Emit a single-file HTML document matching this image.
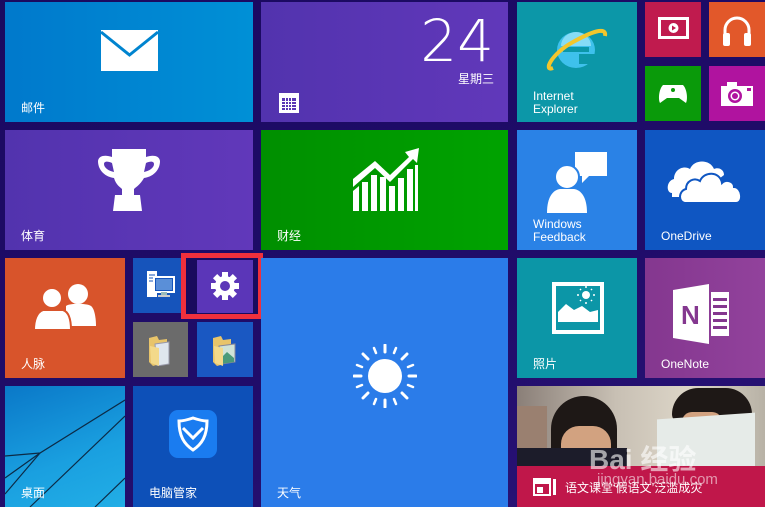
<!DOCTYPE html>
<html><head><meta charset="utf-8">
<style>
*{margin:0;padding:0;box-sizing:border-box}
body{width:765px;height:507px;overflow:hidden;background:#1a0b5e;position:relative;font-family:"Liberation Sans","Noto Sans CJK SC",sans-serif}
.t{position:absolute;overflow:hidden}
.l{position:absolute;left:16px;bottom:7px;color:#fff;font-size:12px;line-height:13px}
svg{position:absolute}
</style></head><body>
<div style="position:absolute;left:0;top:0;width:765px;height:507px;background:linear-gradient(160deg,#1a0a60 0%,#200c6a 60%,#2a1478 100%)"></div>

<!-- Mail -->
<div class="t" style="left:5px;top:2px;width:248px;height:120px;background:linear-gradient(90deg,#0079cc,#0090d6)">
<svg style="left:96px;top:28px" width="57" height="41" viewBox="0 0 57 41"><rect width="57" height="41" fill="#fff"/><path d="M0 2 L28.5 25 L57 2" stroke="#0084cf" stroke-width="3" fill="none"/></svg>
<div class="l">邮件</div></div>

<!-- Calendar -->
<div class="t" style="left:261px;top:2px;width:247px;height:120px;background:linear-gradient(90deg,#5233ae,#6138ba)">
<div style="position:absolute;right:14px;top:10px;color:#fff;font-size:58px;line-height:58px;font-family:'DejaVu Sans',sans-serif;font-weight:200">24</div>
<div style="position:absolute;right:14px;top:68px;color:#fff;font-size:12px">星期三</div>
<svg style="left:18px;top:91px" width="20" height="20" viewBox="0 0 20 20"><rect width="20" height="20" fill="#fff"/><g fill="#5a36b4"><rect x="3" y="5" width="14" height="12"/></g><g stroke="#fff" stroke-width="1"><path d="M3 8.5h14M3 11.5h14M3 14.5h14M6.5 5v12M9.5 5v12M12.5 5v12"/></g></svg>
</div>

<!-- IE -->
<div class="t" style="left:517px;top:2px;width:120px;height:120px;background:#0c97a8">
<svg style="left:26px;top:22px" width="66" height="52" viewBox="0 0 66 52"><ellipse cx="33" cy="26" rx="19" ry="18" fill="#3ec1ec"/><rect x="20" y="23" width="26" height="5" fill="#0c97a8"/><path d="M18 22 A15 14 0 0 1 48 22" fill="#86dcf6"/><rect x="36" y="30" width="18" height="10" fill="#0c97a8"/><path d="M10 44 C0 48 8 30 30 18 C48 8 64 2 62 12" stroke="#f3c62c" stroke-width="4" fill="none"/></svg>
<div class="l" style="bottom:6px;font-size:12px;line-height:13px">Internet<br>Explorer</div></div>

<!-- small top -->
<div class="t" style="left:645px;top:2px;width:56px;height:55px;background:#c01b4e">
<svg style="left:13px;top:15px" width="31" height="22"><rect x="1.5" y="1.5" width="28" height="19" fill="none" stroke="#fff" stroke-width="3"/><circle cx="15.5" cy="11" r="5" fill="#fff"/><path d="M14 8.5 L18 11 L14 13.5z" fill="#c01b4e"/></svg></div>
<div class="t" style="left:709px;top:2px;width:56px;height:55px;background:#e2582a">
<svg style="left:12px;top:12px" width="32" height="34" viewBox="0 0 32 34"><path d="M4 26 V16 A12 12 0 0 1 28 16 V26" stroke="#fff" stroke-width="3" fill="none"/><rect x="2" y="19" width="7" height="13" rx="2" fill="#fff"/><rect x="23" y="19" width="7" height="13" rx="2" fill="#fff"/></svg></div>
<div class="t" style="left:645px;top:66px;width:56px;height:55px;background:#0a9a0a">
<svg style="left:13px;top:17px" width="30" height="22" viewBox="0 0 30 22"><path d="M5 2 H25 C29 6 30 16 28 20 L21 15 H9 L2 20 C0 16 1 6 5 2z" fill="#fff"/><circle cx="15" cy="7" r="2" fill="#0a9a0a"/></svg></div>
<div class="t" style="left:709px;top:66px;width:56px;height:55px;background:#b0139f">
<svg style="left:12px;top:16px" width="32" height="24" viewBox="0 0 32 24"><rect x="0" y="4" width="32" height="20" fill="#fff"/><rect x="6" y="0" width="10" height="5" fill="#fff"/><rect x="26" y="6" width="4" height="3" fill="#b0139f"/><circle cx="14" cy="14" r="7" fill="#b0139f"/><circle cx="14" cy="14" r="4.5" fill="#fff"/><circle cx="14" cy="14" r="3" fill="#b0139f"/></svg></div>

<!-- Sports -->
<div class="t" style="left:5px;top:130px;width:248px;height:120px;background:linear-gradient(90deg,#5233ae,#6138ba)">
<svg style="left:91px;top:17px" width="66" height="64" viewBox="0 0 66 64"><path d="M16 2 H50 V10 C56 8 63 8 64 14 C64 24 56 30 48 31 C44 38 40 40 38 42 V48 H44 L46 64 H17 L19 48 H26 V42 C24 40 20 38 18 31 C10 30 2 24 2 14 C3 8 10 8 16 10z M16 16 C12 14 8 14 8 17 C8 21 13 24 18 25z M50 16 C54 14 58 14 58 17 C58 21 53 24 48 25z" fill="#fff" fill-rule="evenodd"/></svg>
<div class="l">体育</div></div>

<!-- Finance -->
<div class="t" style="left:261px;top:130px;width:247px;height:120px;background:linear-gradient(90deg,#008f00,#00a300)">
<svg style="left:92px;top:17px" width="66" height="64" viewBox="0 0 66 64"><path d="M0 32 L22 14 L37 28 L56 10 L52 5 L66 1 L64 16 L60 12 L37 35 L22 21 L0 40z" fill="#fff"/><g fill="#fff"><path d="M0 44 L6 39 V64 H0z"/><rect x="9" y="35" width="6" height="29"/><rect x="18" y="28" width="6" height="36"/><rect x="27" y="30" width="6" height="34"/><rect x="36" y="39" width="6" height="25"/><rect x="45" y="31" width="6" height="33"/><rect x="54" y="22" width="6" height="42"/><rect x="62" y="18" width="3" height="46"/></g></svg>
<div class="l">财经</div></div>

<!-- Feedback -->
<div class="t" style="left:517px;top:130px;width:120px;height:120px;background:#2a82e6">
<svg style="left:28px;top:22px" width="62" height="62" viewBox="0 0 62 62"><path d="M30 0 H62 V24 H44 L37 31 V24 H30z" fill="#fff"/><circle cx="22" cy="25" r="12" fill="#fff" stroke="#2a82e6" stroke-width="2"/><path d="M2 61 C2 45 8 38 15 37 H29 C36 38 42 45 42 61z" fill="#fff"/></svg>
<div class="l" style="bottom:6px">Windows<br>Feedback</div></div>

<!-- OneDrive -->
<div class="t" style="left:645px;top:130px;width:120px;height:120px;background:#0f56c2">
<svg style="left:21px;top:27px" width="80" height="48" viewBox="0 0 80 48"><path d="M6 36 C0 36 0 24 8 22 C8 12 18 8 24 12 C28 2 44 2 48 12 C52 10 58 12 58 18 L30 40 H6z" fill="#fff"/><path d="M20 46 C12 46 12 34 20 32 C20 24 28 20 34 24 C38 14 54 14 56 26 C60 22 68 24 68 30 C76 30 78 46 70 46z" fill="#fff" stroke="#0f56c2" stroke-width="2"/></svg>
<div class="l" style="bottom:7px">OneDrive</div></div>

<!-- People -->
<div class="t" style="left:5px;top:258px;width:120px;height:120px;background:#d8542b">
<svg style="left:28px;top:26px" width="64" height="46" viewBox="0 0 64 46"><circle cx="45" cy="10" r="10" fill="#fff"/><path d="M33 22 C36 19 54 19 58 22 C62 25 63 36 63 42 H33z" fill="#fff"/><circle cx="19" cy="14" r="10" fill="#fff" stroke="#d8542b" stroke-width="2"/><path d="M1 46 C1 36 4 28 10 26 H30 C36 28 38 36 38 46z" fill="#fff" stroke="#d8542b" stroke-width="2"/></svg>
<div class="l">人脉</div></div>

<!-- small tiles -->
<div class="t" style="left:133px;top:258px;width:55px;height:55px;background:#1654bb">
<svg style="left:14px;top:13px" width="28" height="28" viewBox="0 0 28 28"><rect x="0" y="0" width="10" height="26" fill="#fff"/><g stroke="#1654bb"><path d="M2 4h6M2 7h6M2 10h6"/></g><rect x="7" y="6" width="20" height="15" fill="#1654bb" stroke="#fff" stroke-width="2"/><rect x="9" y="8" width="16" height="11" fill="#5a8fd8"/><rect x="14" y="21" width="6" height="3" fill="#9bb"/><rect x="11" y="24" width="12" height="2" fill="#ccc"/></svg></div>
<div class="t" style="left:181px;top:253px;width:82px;height:66px;border:5px solid #f0303c;background:#1a0b5e"></div>
<div class="t" style="left:197px;top:260px;width:56px;height:53px;background:#5b36b8">
<svg style="left:14px;top:12px" width="28" height="28" viewBox="-14 -14 28 28"><g fill="#fff"><circle r="10"/><rect x="-3" y="-14" width="6" height="28"/><rect x="-3" y="-14" width="6" height="28" transform="rotate(45)"/><rect x="-3" y="-14" width="6" height="28" transform="rotate(90)"/><rect x="-3" y="-14" width="6" height="28" transform="rotate(135)"/></g><circle r="5" fill="#5b36b8"/></svg></div>
<div class="t" style="left:133px;top:322px;width:55px;height:55px;background:#6b6b6b">
<svg style="left:14px;top:12px" width="26" height="32" viewBox="0 0 26 32"><path d="M2 4 L10 2 L12 6 L20 5 V28 L6 32 L2 28z" fill="#e8c46a"/><path d="M8 10 L22 8 V30 L10 32z" fill="#dfe6ee" stroke="#99a" stroke-width="1"/><path d="M3 12 L12 14 V32 L4 29z" fill="#f3d98a"/></svg></div>
<div class="t" style="left:197px;top:322px;width:56px;height:55px;background:#1a58c2">
<svg style="left:14px;top:12px" width="26" height="32" viewBox="0 0 26 32"><path d="M2 4 L10 2 L12 6 L20 5 V28 L6 32 L2 28z" fill="#e8c46a"/><path d="M8 12 L24 10 V28 L10 30z" fill="#cfe3d8" stroke="#889" stroke-width="1"/><path d="M10 24 L16 18 L23 24 V28 L10 30z" fill="#4a9a7a"/><path d="M3 12 L12 14 V32 L4 29z" fill="#f3d98a"/></svg></div>

<!-- Desktop -->
<div class="t" style="left:5px;top:386px;width:120px;height:121px;background:linear-gradient(160deg,#0a78c8,#1aa0e0 60%,#22aee6)">
<svg style="left:0;top:0" width="120" height="121" viewBox="0 0 120 121"><g stroke="#0c2a45" stroke-width="1.2" fill="none"><path d="M0 70 L35 67 L120 14"/><path d="M0 92 L35 67"/><path d="M0 108 L35 67"/><path d="M25 121 L120 30"/><path d="M90 121 L120 92"/></g></svg>
<div class="l">桌面</div></div>

<!-- Tencent -->
<div class="t" style="left:133px;top:386px;width:120px;height:121px;background:#0d50b8">
<svg style="left:36px;top:24px" width="48" height="48" viewBox="0 0 48 48"><rect width="48" height="48" rx="9" fill="#1a7cf0"/><path d="M24 8 C30 10 34 11 38 11 C38 26 33 34 24 40 C15 34 10 26 10 11 C14 11 18 10 24 8z" fill="none" stroke="#fff" stroke-width="3"/><path d="M14 18 L24 28 L34 18" fill="none" stroke="#fff" stroke-width="3"/></svg>
<div class="l" style="font-size:12px">电脑管家</div></div>

<!-- Weather -->
<div class="t" style="left:261px;top:258px;width:247px;height:249px;background:#2b7ce9">
<svg style="left:92px;top:86px" width="64" height="64" viewBox="-32 -32 64 64"><circle r="17" fill="#fff"/><g stroke="#fff" stroke-width="3" stroke-linecap="round"><path d="M0 -31V-24M0 24V31M-31 0H-24M24 0H31M-22 -22L-17 -17M17 17L22 22M-22 22L-17 17M17 -17L22 -22"/><path d="M-11 -28L-9 -23M11 28L9 23M11 -28L9 -23M-11 28L-9 23M-28 -11L-23 -9M28 11L23 9M-28 11L-23 9M28 -11L23 -9" stroke-width="2.5"/></g></svg>
<div class="l">天气</div></div>

<!-- Photos -->
<div class="t" style="left:517px;top:258px;width:120px;height:120px;background:#0c96a7">
<svg style="left:35px;top:24px" width="52" height="52" viewBox="0 0 52 52"><rect x="2" y="2" width="48" height="48" fill="none" stroke="#fff" stroke-width="4"/><path d="M6 40 V30 L14 22 L22 28 L30 24 L38 30 L46 28 V40z" fill="#fff"/><circle cx="34" cy="13" r="4" fill="#fff"/><g stroke="#fff" stroke-width="1.5"><path d="M34 4v2M34 20v2M25 13h2M41 13h2M28 7l1 1M39 18l1 1M28 19l1-1M39 8l1-1"/></g></svg>
<div class="l">照片</div></div>

<!-- OneNote -->
<div class="t" style="left:645px;top:258px;width:120px;height:120px;background:linear-gradient(90deg,#84378f,#92429c)">
<svg style="left:28px;top:26px" width="64" height="60" viewBox="0 0 64 60"><path d="M0 6 L36 0 V60 L0 54z" fill="#fff"/><text x="8" y="40" font-family="Liberation Sans" font-weight="bold" font-size="26" fill="#84378f">N</text><g fill="#fff"><rect x="38" y="8" width="18" height="44"/></g><g fill="#84378f"><rect x="40" y="14" width="14" height="3"/><rect x="40" y="21" width="14" height="3"/><rect x="40" y="28" width="14" height="3"/><rect x="40" y="35" width="14" height="3"/><rect x="40" y="42" width="14" height="3"/></g></svg>
<div class="l" style="bottom:7px">OneNote</div></div>

<!-- News -->
<div class="t" style="left:517px;top:386px;width:248px;height:121px;background:linear-gradient(90deg,#8a7f78,#c8c0b4 40%,#ddd6c8 70%,#b8b2a6)">
<div style="position:absolute;left:0;top:20px;width:30px;height:60px;background:#9a8070"></div>
<div style="position:absolute;left:34px;top:10px;width:66px;height:75px;border-radius:34px 34px 20px 20px;background:#1e1816"></div>
<div style="position:absolute;left:44px;top:40px;width:50px;height:42px;border-radius:18px;background:#d2a280"></div>
<div style="position:absolute;left:0;top:62px;width:110px;height:20px;background:#1c1c2a"></div>
<div style="position:absolute;left:155px;top:2px;width:80px;height:35px;border-radius:30px 30px 10px 10px;background:#1e1816"></div>
<div style="position:absolute;left:165px;top:26px;width:40px;height:20px;border-radius:10px;background:#d2a280"></div>
<div style="position:absolute;left:140px;top:30px;width:98px;height:55px;background:#e6ebe8;transform:skewY(-4deg)"></div>
<div style="position:absolute;left:0;top:80px;width:248px;height:41px;background:#c0174a"></div>
<svg style="left:16px;top:92px" width="24" height="18" viewBox="0 0 24 18"><rect x="1" y="1" width="16" height="16" fill="none" stroke="#fff" stroke-width="2"/><rect x="1" y="1" width="16" height="5" fill="#fff"/><rect x="4" y="9" width="6" height="6" fill="#fff"/><rect x="20" y="1" width="3" height="16" fill="#fff"/></svg>
<div style="position:absolute;left:48px;top:93px;color:#fff;font-size:12px;white-space:nowrap">语文课堂‘假语文’泛滥成灾</div>
<div style="position:absolute;left:72px;top:52px;color:rgba(255,255,255,.6);font-size:28px;font-weight:bold;white-space:nowrap">Bai 经验</div>
<div style="position:absolute;left:80px;top:85px;color:rgba(255,255,255,.55);font-size:15px;white-space:nowrap">jingyan.baidu.com</div>
</div>
</body></html>
